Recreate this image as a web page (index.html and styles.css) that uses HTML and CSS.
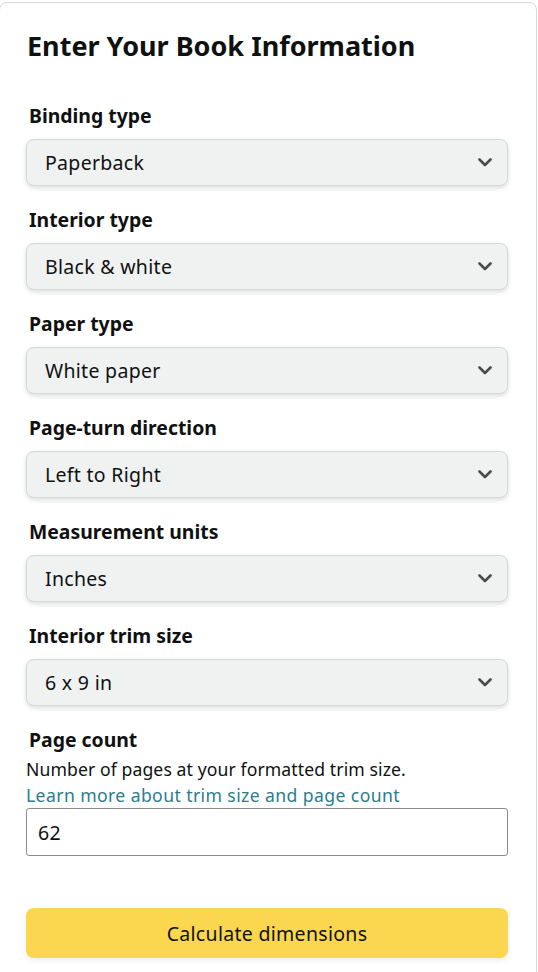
FILE: index.html
```html
<!DOCTYPE html>
<html lang="en">
<head>
<meta charset="utf-8">
<title>Enter Your Book Information</title>
<link rel="stylesheet" href="styles.css">
</head>
<body>
<div class="card">
  <h1 class="title">Enter Your Book Information</h1>

  <div class="field">
    <div class="label">Binding type</div>
    <div class="select"><span>Paperback</span><svg class="chev" viewBox="0 0 14 9" width="14" height="9"><path d="M1.5 1.5 L7 7 L12.5 1.5" fill="none" stroke="#4a4c4c" stroke-width="2.6" stroke-linecap="round" stroke-linejoin="round"/></svg></div>
  </div>

  <div class="field">
    <div class="label">Interior type</div>
    <div class="select"><span>Black &amp; white</span><svg class="chev" viewBox="0 0 14 9" width="14" height="9"><path d="M1.5 1.5 L7 7 L12.5 1.5" fill="none" stroke="#4a4c4c" stroke-width="2.6" stroke-linecap="round" stroke-linejoin="round"/></svg></div>
  </div>

  <div class="field">
    <div class="label">Paper type</div>
    <div class="select"><span>White paper</span><svg class="chev" viewBox="0 0 14 9" width="14" height="9"><path d="M1.5 1.5 L7 7 L12.5 1.5" fill="none" stroke="#4a4c4c" stroke-width="2.6" stroke-linecap="round" stroke-linejoin="round"/></svg></div>
  </div>

  <div class="field">
    <div class="label">Page-turn direction</div>
    <div class="select"><span>Left to Right</span><svg class="chev" viewBox="0 0 14 9" width="14" height="9"><path d="M1.5 1.5 L7 7 L12.5 1.5" fill="none" stroke="#4a4c4c" stroke-width="2.6" stroke-linecap="round" stroke-linejoin="round"/></svg></div>
  </div>

  <div class="field">
    <div class="label">Measurement units</div>
    <div class="select"><span>Inches</span><svg class="chev" viewBox="0 0 14 9" width="14" height="9"><path d="M1.5 1.5 L7 7 L12.5 1.5" fill="none" stroke="#4a4c4c" stroke-width="2.6" stroke-linecap="round" stroke-linejoin="round"/></svg></div>
  </div>

  <div class="field">
    <div class="label">Interior trim size</div>
    <div class="select"><span>6 x 9 in</span><svg class="chev" viewBox="0 0 14 9" width="14" height="9"><path d="M1.5 1.5 L7 7 L12.5 1.5" fill="none" stroke="#4a4c4c" stroke-width="2.6" stroke-linecap="round" stroke-linejoin="round"/></svg></div>
  </div>

  <div class="field field-last">
    <div class="label">Page count</div>
    <div class="desc">Number of pages at your formatted trim size.</div>
    <a class="link" href="#">Learn more about trim size and page count</a>
    <div class="input">62</div>
  </div>

  <button class="btn" type="button">Calculate dimensions</button>
</div>
</body>
</html>
```

FILE: styles.css
```css
html, body {
  margin: 0;
  padding: 0;
  background: #ffffff;
}

body {
  font-family: "Noto Sans", "Open Sans", Arial, sans-serif;
  color: #0f1111;
  padding-top: 2px;
}

.card {
  width: 538px;
  margin-left: -1px;
  box-sizing: border-box;
  border: 1px solid #d5d9d9;
  border-radius: 8px;
  padding: 23px 28px 40px 26px;
  min-height: 1000px;
}

.title {
  margin: 0 0 38px 1px;
  font-size: 27px;
  line-height: 40px;
  font-weight: 700;
}

.field {
  margin-bottom: 22px;
}

.label {
  font-size: 19.4px;
  line-height: 24px;
  font-weight: 700;
  margin-left: 3px;
  margin-bottom: 11px;
}

.select {
  display: flex;
  align-items: center;
  justify-content: space-between;
  height: 47px;
  box-sizing: border-box;
  padding: 0 15px 0 18px;
  background: #f0f2f2;
  border: 1px solid #d5d9d9;
  border-radius: 8px;
  box-shadow: 0 2px 5px rgba(15, 17, 17, 0.15);
  font-size: 19.5px;
  letter-spacing: 0.3px;
}

.chev {
  display: block;
}

.field-last .label {
  margin-bottom: 4px;
}

.desc {
  font-size: 17.6px;
  line-height: 26px;
  letter-spacing: 0.1px;
}

.link {
  display: block;
  font-size: 17.6px;
  line-height: 26px;
  letter-spacing: 0.4px;
  color: #2a7d8e;
  text-decoration: none;
}

.input {
  height: 48px;
  box-sizing: border-box;
  border: 1px solid #888c8c;
  border-radius: 3px;
  padding: 0 11px;
  display: flex;
  align-items: center;
  font-size: 19.5px;
  letter-spacing: 0.3px;
  background: #fff;
}

.field-last {
  margin-bottom: 52px;
}

.btn {
  display: block;
  width: 100%;
  height: 50px;
  border: none;
  border-radius: 8px;
  background: #fad74e;
  box-shadow: 0 2px 5px rgba(213, 217, 217, 0.5);
  font-family: inherit;
  font-size: 19.5px;
  letter-spacing: 0.3px;
  color: #0f1111;
  cursor: pointer;
}
```
